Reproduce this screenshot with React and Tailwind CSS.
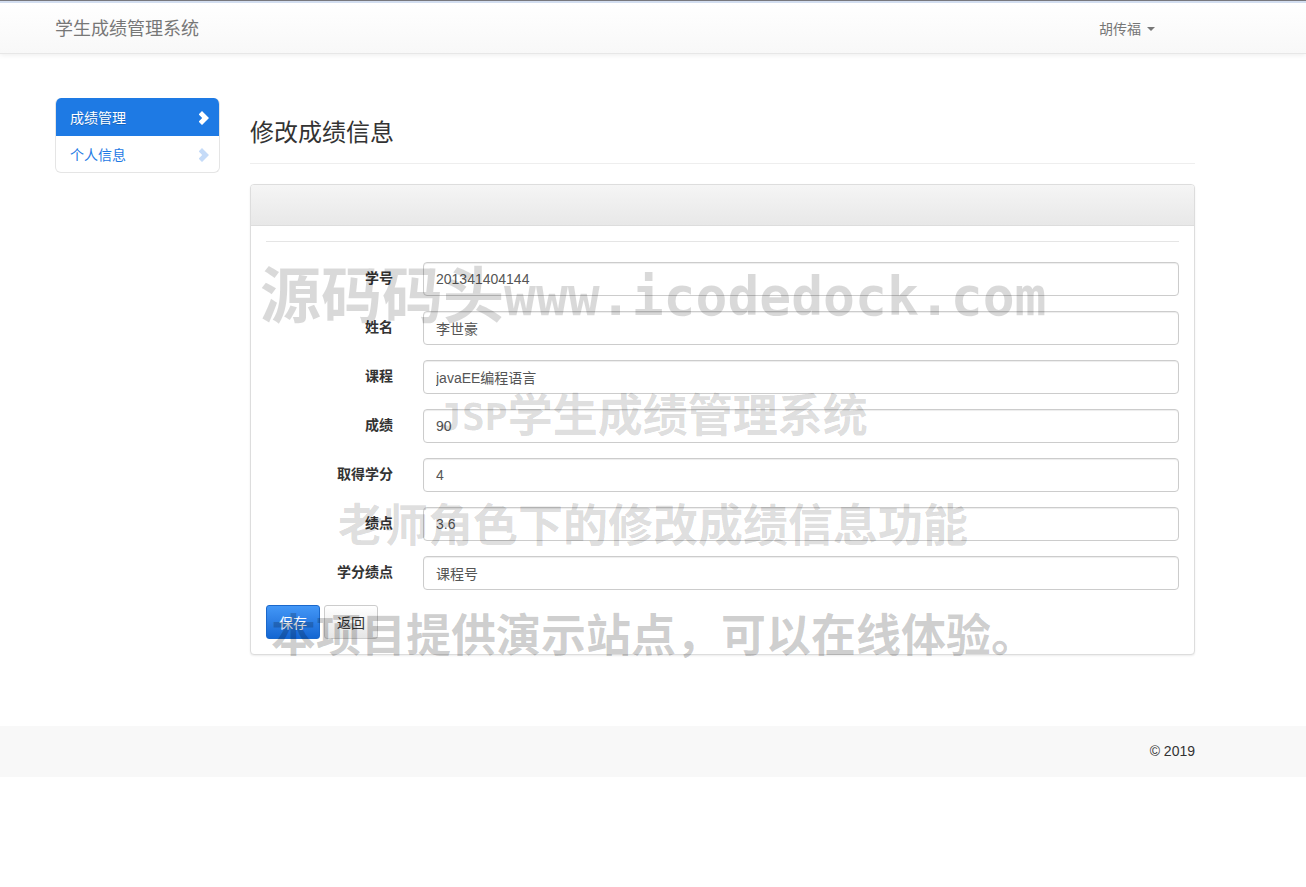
import React, { useState } from 'react';

const fields = [
  { id: 'sno', label: '学号', value: '201341404144' },
  { id: 'name', label: '姓名', value: '李世豪' },
  { id: 'course', label: '课程', value: 'javaEE编程语言' },
  { id: 'score', label: '成绩', value: '90' },
  { id: 'credit', label: '取得学分', value: '4' },
  { id: 'point', label: '绩点', value: '3.6' },
  { id: 'creditPoint', label: '学分绩点', value: '课程号' },
];

const Chevron = ({ className }) => (
  <svg className={className} width="10" height="14" viewBox="0 0 10 14" fill="currentColor" aria-hidden="true">
    <path d="M3 0 L10 7 L3 14 L-0.4 10.6 L3.2 7 L-0.4 3.4 Z" />
  </svg>
);

const Container = ({ className = '', children }) => (
  <div className="pr-14">
    <div className={`mx-auto max-w-[1170px] px-[15px] ${className}`}>{children}</div>
  </div>
);

const Navbar = () => (
  <header className="border-t border-[#7b7b80]">
    <nav className="border-t-2 border-t-[#d3def0] border-b border-b-[#e7e7e7] bg-linear-to-b from-white to-[#f8f8f8] shadow-[0_1px_5px_rgba(0,0,0,0.075)]">
      <Container className="flex h-[50px] items-center justify-between pt-0.5">
        <a href="#" className="text-lg text-[#777]">学生成绩管理系统</a>
        <button type="button" className="mr-10 flex items-center gap-[6px] text-sm text-[#777]">
          胡传福
          <span className="border-x-4 border-t-4 border-x-transparent border-t-[#777]" />
        </button>
      </Container>
    </nav>
  </header>
);

const Sidebar = () => (
  <aside className="mt-11 w-[165px] shrink-0">
    <ul className="overflow-hidden rounded-md border border-t-0 border-[#e5e5e5] text-sm">
      <li>
        <a href="#" className="flex h-[38px] items-center justify-between bg-[#1e7ae4] pt-0.5 pr-[10px] pl-[14px] text-white [text-shadow:0_1px_0_rgba(0,0,0,0.2)]">
          成绩管理
          <Chevron />
        </a>
      </li>
      <li>
        <a href="#" className="flex h-9 items-center justify-between pt-0.5 pr-[10px] pl-[14px] text-[#1e7ae4]">
          个人信息
          <Chevron className="text-[#c5dbf8]" />
        </a>
      </li>
    </ul>
  </aside>
);

const ScoreForm = () => {
  const [values, setValues] = useState(Object.fromEntries(fields.map((f) => [f.id, f.value])));

  const handleChange = (e) => {
    setValues({ ...values, [e.target.id]: e.target.value });
  };

  return (
    <form className="p-[15px]" onSubmit={(e) => e.preventDefault()}>
      <hr className="mb-5 border-[#e5e5e5]" />
      {fields.map((field) => (
        <div key={field.id} className="mb-[15px] flex items-center">
          <label htmlFor={field.id} className="w-[127px] shrink-0 pb-0.5 text-right text-sm font-bold text-[#333]">
            {field.label}
          </label>
          <input
            id={field.id}
            type="text"
            value={values[field.id]}
            onChange={handleChange}
            className="ml-[30px] h-[34px] min-w-0 flex-1 rounded border border-[#ccc] bg-white px-3 text-sm text-[#555] shadow-[inset_0_1px_1px_rgba(0,0,0,0.075)]"
          />
        </div>
      ))}
      <div className="flex gap-1">
        <button type="submit" className="h-[34px] rounded-[3px] border border-[#1a68cb] bg-linear-to-b from-[#4397f7] to-[#1366d2] px-3 pt-0.5 text-sm text-white">
          保存
        </button>
        <button type="button" className="h-[34px] rounded-[3px] border border-[#ccc] bg-linear-to-b from-white to-[#e6e6e6] px-3 pt-0.5 text-sm text-[#333]">
          返回
        </button>
      </div>
    </form>
  );
};

// Promo lines printed over the page
const Watermark = () => (
  <div className="pointer-events-none absolute inset-0 overflow-hidden font-bold whitespace-nowrap text-black/15">
    <p className="absolute top-[267px] left-[260px] flex items-center text-[61px] leading-[60px]">
      源码码头
      <span className="font-['DejaVu_Sans_Mono',monospace] text-[53px]">www.icodedock.com</span>
    </p>
    <p className="absolute top-[387px] left-[439px] flex items-center text-[45px] leading-[60px]">
      <span className="font-['DejaVu_Sans_Mono',monospace] text-[38px]">JSP</span>
      学生成绩管理系统
    </p>
    <p className="absolute top-[497px] left-[338px] text-[45px] leading-[60px]">
      老师角色下的修改成绩信息功能
    </p>
    <p className="absolute top-[607px] left-[271px] text-[45px] leading-[60px] text-black/20">
      本项目提供演示站点，可以在线体验。
    </p>
  </div>
);

export default function App() {
  return (
    <div className="relative min-h-screen bg-white font-['Liberation_Sans','Noto_Sans_CJK_SC',sans-serif] text-sm text-[#333]">
      <Navbar />
      <Container className="flex gap-[30px]">
        <Sidebar />
        <main className="mt-[62px] mb-[71px] min-w-0 flex-1">
          <h1 className="mb-5 border-b border-[#eee] pb-[13px] text-2xl leading-[34px]">修改成绩信息</h1>
          <section className="rounded border border-[#ddd] bg-white shadow-[0_1px_2px_rgba(0,0,0,0.075)]">
            <div className="h-[41px] rounded-t-[3px] border-b border-[#ddd] bg-linear-to-b from-[#f5f5f5] to-[#e8e8e8]" />
            <ScoreForm />
          </section>
        </main>
      </Container>
      <footer className="bg-[#f8f8f8]">
        <Container className="flex h-[51px] items-center justify-end pb-0.5">
          <p>© 2019</p>
        </Container>
      </footer>
      <Watermark />
    </div>
  );
}
